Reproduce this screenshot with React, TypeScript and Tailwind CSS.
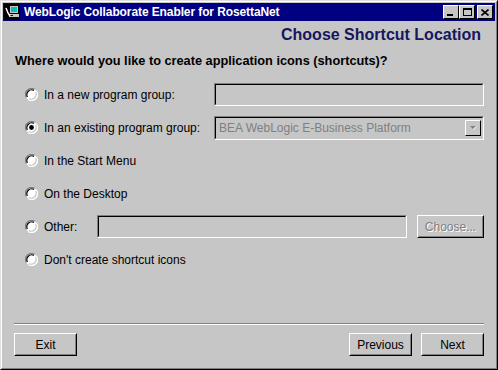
import React from 'react';

const font = { fontFamily: '"Liberation Sans", Arial, sans-serif' };

const Radio: React.FC<{ checked?: boolean }> = ({ checked }) => (
  <svg width="13" height="13" viewBox="0 0 13 13" className="shrink-0">
    <circle cx="6.5" cy="6.5" r="6" fill="#ffffff" />
    <path d="M1.3 9.5 A6 6 0 0 1 9.5 1.3" fill="none" stroke="#808080" strokeWidth="1.2" />
    <path d="M2.4 9 A4.9 4.9 0 0 1 9 2.4" fill="none" stroke="#000000" strokeWidth="1.2" />
    <path d="M3.5 11.7 A6 6 0 0 0 11.7 3.5" fill="none" stroke="#ffffff" strokeWidth="1.2" />
    <path d="M4 10.6 A4.9 4.9 0 0 0 10.6 4" fill="none" stroke="#c6c6c6" strokeWidth="1.2" />
    {checked && <circle cx="6.5" cy="6.5" r="2.4" fill="#000000" />}
  </svg>
);

const Sunken: React.FC<{ className?: string; children?: React.ReactNode }> = ({ className = '', children }) => (
  <div className={`border border-t-[#808080] border-l-[#808080] border-b-white border-r-white ${className}`}>
    <div className="h-full border border-t-black border-l-black border-b-[#c6c6c6] border-r-[#c6c6c6] bg-[#c6c6c6] flex items-center">
      {children}
    </div>
  </div>
);

const Button: React.FC<{ label: string; className?: string; disabled?: boolean }> = ({ label, className = '', disabled }) => (
  <div className={`h-[23px] border border-t-white border-l-white border-b-black border-r-black ${className}`}>
    <div className="h-full border border-t-[#c6c6c6] border-l-[#c6c6c6] border-b-[#808080] border-r-[#808080] flex items-center justify-center text-[12px]">
      {disabled ? (
        <span className="text-[#808080] [text-shadow:1px_1px_0_#ffffff]">{label}</span>
      ) : (
        <span className="text-black">{label}</span>
      )}
    </div>
  </div>
);

const TitleButton: React.FC<{ children: React.ReactNode; className?: string }> = ({ children, className = '' }) => (
  <div className={`w-[16px] h-[14px] bg-[#c6c6c6] border border-t-white border-l-white border-b-black border-r-black flex items-center justify-center ${className}`}>
    {children}
  </div>
);

const App: React.FC = () => {
  const rows = [
    { label: 'In a new program group:' },
    { label: 'In an existing program group:', checked: true },
    { label: 'In the Start Menu' },
    { label: 'On the Desktop' },
    { label: 'Other:' },
    { label: "Don't create shortcut icons" },
  ];

  return (
    <div style={font} className="w-[498px] h-[370px] bg-[#c6c6c6] border border-t-[#dfdfdf] border-l-[#dfdfdf] border-b-black border-r-black overflow-hidden">
      <div className="h-full border border-t-white border-l-white border-b-[#808080] border-r-[#808080] p-px flex flex-col">
        {/* title bar */}
        <div className="h-[18px] bg-[#000080] flex items-center pl-px pr-[2px]">
          <svg width="16" height="16" viewBox="0 0 16 16" className="shrink-0">
            <rect width="16" height="16" fill="#000000" />
            <rect x="6" y="2" width="8" height="7" fill="#c6c6c6" />
            <rect x="7" y="3" width="6" height="5" fill="#00c0c0" />
            <rect x="5" y="10" width="10" height="3" fill="#c6c6c6" />
            <rect x="6" y="11" width="3" height="1" fill="#000080" />
            <path d="M2 4 L4 9 L6 12" stroke="#ffffff" strokeWidth="1.5" fill="none" />
          </svg>
          <span className="ml-[4px] text-white font-bold text-[12px] leading-none tracking-[-0.1px]">
            WebLogic Collaborate Enabler for RosettaNet
          </span>
          <div className="ml-auto flex items-center">
            <TitleButton>
              <div className="w-[6px] h-[2px] bg-black mt-[6px] -ml-[2px]" />
            </TitleButton>
            <TitleButton>
              <div className="w-[9px] h-[8px] border border-black border-t-2" />
            </TitleButton>
            <TitleButton className="ml-[2px]">
              <svg width="8" height="7" viewBox="0 0 8 7">
                <path d="M0.5 0.5 L7.5 6.5 M7.5 0.5 L0.5 6.5" stroke="#000" strokeWidth="1.6" />
              </svg>
            </TitleButton>
          </div>
        </div>

        {/* body */}
        <div className="flex-1 flex flex-col px-[11px]">
          <div className="mt-[4px] h-[20px] flex items-center justify-end pr-[3px]">
            <span className="text-[16px] font-bold text-[#17175e]">Choose Shortcut Location</span>
          </div>
          <div className="mt-[8px] pl-px h-[16px] flex items-center text-[12.75px] font-bold text-black">
            Where would you like to create application icons (shortcuts)?
          </div>

          <div className="mt-[14px] flex flex-col gap-[10px] pl-[11px]">
            {rows.map((r, i) => (
              <div key={i} className="h-[23px] flex items-center">
                <Radio checked={r.checked} />
                <span className="ml-[6px] text-[12px] text-black whitespace-nowrap">{r.label}</span>
                {i === 0 && <Sunken className="ml-auto w-[270px] h-[23px]" />}
                {i === 1 && (
                  <Sunken className="ml-auto w-[270px] h-[24px]">
                    <span className="ml-[3px] text-[12px] text-[#808080]">BEA WebLogic E-Business Platform</span>
                    <div className="ml-auto mr-px w-[16px] h-[16px] border border-t-white border-l-white border-b-black border-r-black flex items-center justify-center">
                      <svg width="8" height="5" viewBox="0 0 8 5">
                        <path d="M1 1 L7 1 L4 4 Z" fill="#808080" />
                        <path d="M7 1.5 L4.5 4.5" stroke="#ffffff" strokeWidth="1" />
                      </svg>
                    </div>
                  </Sunken>
                )}
                {i === 4 && (
                  <>
                    <Sunken className="ml-[20px] w-[310px] h-[23px]" />
                    <Button label="Choose..." disabled className="ml-auto w-[67px]" />
                  </>
                )}
              </div>
            ))}
          </div>

          {/* footer */}
          <div className="mt-auto mb-[11px] flex flex-col">
            <div className="h-px bg-[#808080]" />
            <div className="h-px bg-white" />
            <div className="mt-[8px] flex items-center">
              <Button label="Exit" className="w-[63px]" />
              <Button label="Previous" className="ml-auto w-[63px]" />
              <Button label="Next" className="ml-[9px] w-[63px]" />
            </div>
          </div>
        </div>
      </div>
    </div>
  );
};

export default App;
